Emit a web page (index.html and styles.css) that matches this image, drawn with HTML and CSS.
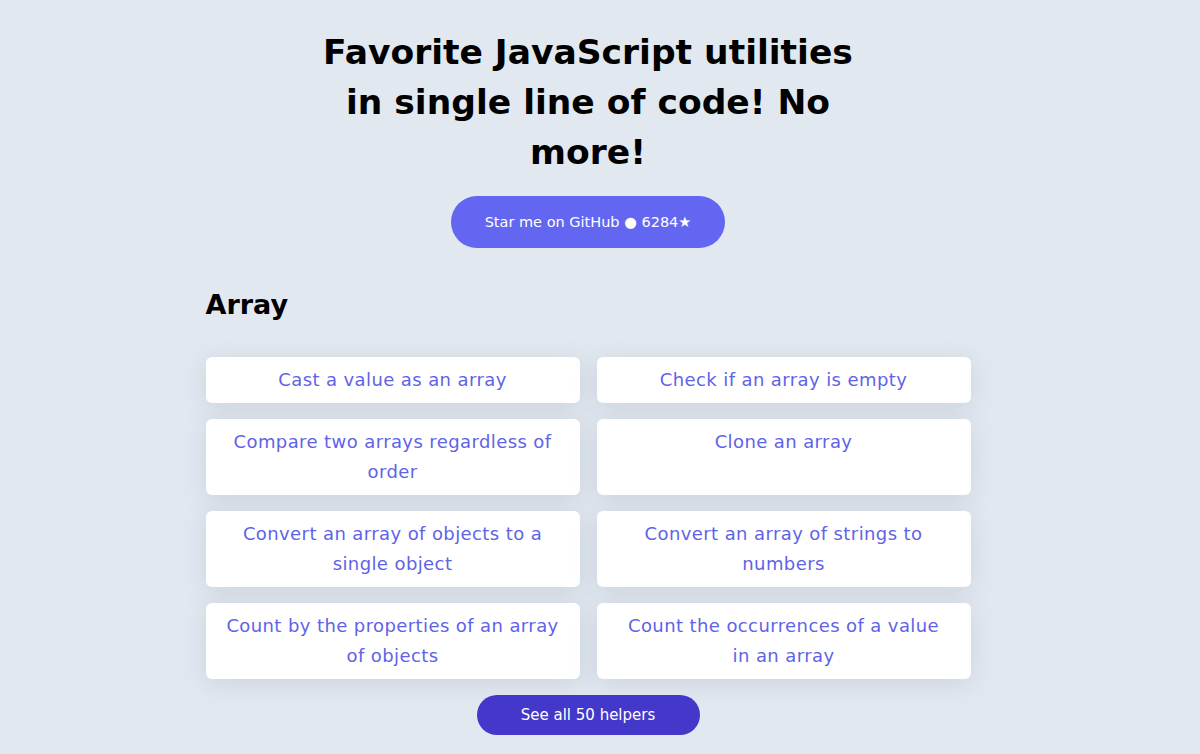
FILE: index.html
```html
<!DOCTYPE html>
<html lang="en">
<head>
<meta charset="utf-8">
<title>1 LOC</title>
<link rel="stylesheet" href="styles.css">
</head>
<body>
<div class="page">
  <header class="hero">
    <h1 class="title">Favorite JavaScript utilities in single line of code! No more!</h1>
    <a class="star-btn" href="#">Star me on GitHub ● 6284★</a>
  </header>
  <main class="content">
    <h2 class="section-title">Array</h2>
    <div class="grid">
      <a class="card" href="#">Cast a value as an array</a>
      <a class="card" href="#">Check if an array is empty</a>
      <a class="card" href="#">Compare two arrays regardless of order</a>
      <a class="card" href="#">Clone an array</a>
      <a class="card" href="#">Convert an array of objects to a single object</a>
      <a class="card" href="#">Convert an array of strings to numbers</a>
      <a class="card" href="#">Count by the properties of an array of objects</a>
      <a class="card" href="#">Count the occurrences of a value<br>in an array</a>
    </div>
    <div class="more">
      <a class="more-btn" href="#">See all 50 helpers</a>
    </div>
  </main>
</div>
</body>
</html>
```
FILE: styles.css
```css
* { box-sizing: border-box; }
html, body { margin: 0; padding: 0; }
body {
  background: #e2e8f0;
  font-family: "DejaVu Sans", "Open Sans", sans-serif;
  color: #000;
}
a { text-decoration: none; }
.page {
  width: 1176px;
  display: flex;
  flex-direction: column;
  align-items: center;
  padding-top: 27px;
}
.hero {
  display: flex;
  flex-direction: column;
  align-items: center;
}
.title {
  margin: 0;
  width: 545px;
  text-align: center;
  font-size: 34.5px;
  line-height: 50px;
  font-weight: 700;
}
.star-btn {
  margin-top: 19px;
  width: 274px;
  height: 52px;
  border-radius: 26px;
  background: #6366f1;
  color: #fff;
  font-size: 14.5px;
  display: flex;
  align-items: center;
  justify-content: center;
}
.content {
  width: 765px;
  margin-top: 37px;
}
.section-title {
  margin: 0;
  font-size: 27px;
  line-height: 40px;
  font-weight: 700;
}
.grid {
  margin-top: 32px;
  display: grid;
  grid-template-columns: 1fr 1fr;
  gap: 16px 17px;
}
.card {
  background: #fff;
  border-radius: 6px;
  padding: 8px 15px;
  text-align: center;
  color: #6063e8;
  font-size: 18px;
  letter-spacing: 0.4px;
  line-height: 30px;
  box-shadow: 0 4px 24px rgba(100, 116, 139, 0.18);
}
.more {
  display: flex;
  justify-content: center;
  margin-top: 16px;
}
.more-btn {
  width: 223px;
  height: 40px;
  border-radius: 20px;
  background: #4338ca;
  color: #fff;
  font-size: 15px;
  display: flex;
  align-items: center;
  justify-content: center;
}
```
